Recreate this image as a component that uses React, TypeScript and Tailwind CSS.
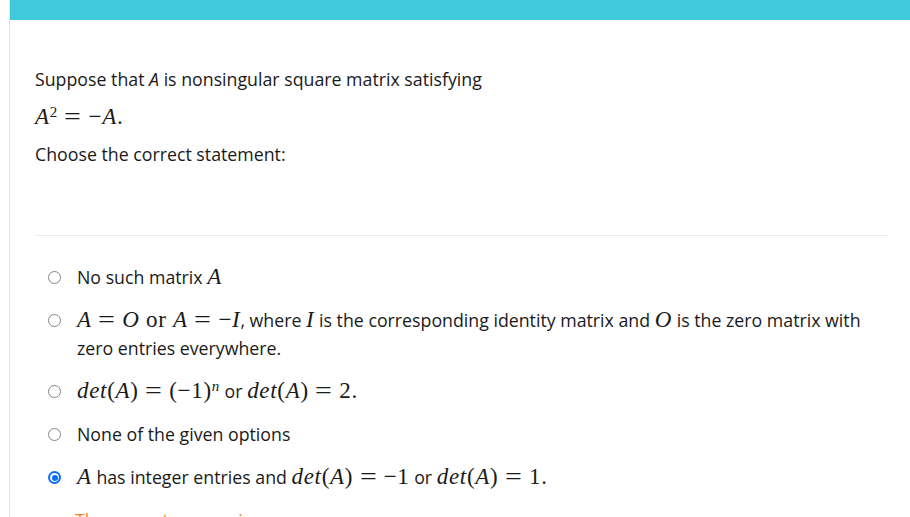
import React from "react";

const M = ({ children }: { children: React.ReactNode }) => (
  <span className="font-['Liberation_Serif',serif] text-[23px] leading-[0] tracking-[0.03em]">{children}</span>
);
const I = ({ children }: { children: React.ReactNode }) => <i className="italic">{children}</i>;
const Eq = () => <span className="mx-[2px] inline-block scale-x-[1.3]">=</span>;

const options: { key: string; checked?: boolean; body: React.ReactNode }[] = [
  {
    key: "a",
    body: (
      <>
        No such matrix{" "}
        <M>
          <I>A</I>
        </M>
      </>
    ),
  },
  {
    key: "b",
    body: (
      <>
        <span className="whitespace-nowrap">
          <M>
            <I>A</I> <Eq /> <I>O</I> or <I>A</I> <Eq /> −<I>I</I>
          </M>
          , where{" "}
          <M>
            <I>I</I>
          </M>{" "}
          is the corresponding identity matrix and{" "}
          <M>
            <I>O</I>
          </M>{" "}
          is the zero matrix with
        </span>
        <br />
        zero entries everywhere.
      </>
    ),
  },
  {
    key: "c",
    body: (
      <>
        <M>
          <I>det</I>(<I>A</I>) <Eq /> (−1)<sup className="text-[15px] italic">n</sup>
        </M>{" "}
        or{" "}
        <M>
          <I>det</I>(<I>A</I>) <Eq /> 2.
        </M>
      </>
    ),
  },
  { key: "d", body: <>None of the given options</> },
  {
    key: "e",
    checked: true,
    body: (
      <>
        <M>
          <I>A</I>
        </M>{" "}
        has integer entries and{" "}
        <M>
          <I>det</I>(<I>A</I>) <Eq /> −1
        </M>{" "}
        or{" "}
        <M>
          <I>det</I>(<I>A</I>) <Eq /> 1.
        </M>
      </>
    ),
  },
];

function Radio({ checked }: { checked?: boolean }) {
  if (checked)
    return (
      <span className="mt-[8px] flex h-[13px] w-[13px] shrink-0 items-center justify-center rounded-full bg-[#0a6cff]">
        <span className="flex h-[9px] w-[9px] items-center justify-center rounded-full bg-white">
          <span className="h-[6px] w-[6px] rounded-full bg-[#0a6cff]" />
        </span>
      </span>
    );
  return <span className="mt-[8px] h-[13px] w-[13px] shrink-0 rounded-full border border-[#858585]" />;
}

export default function App() {
  return (
    <div className="w-[910px] h-[517px] overflow-hidden bg-white text-[#1a1a1a] font-['Open_Sans',sans-serif] text-[17.75px]">
      <div className="ml-[9px] min-h-[517px] border-l border-[#e2e2e2]">
        <div className="h-5 bg-[#40c9da]" />
        <div className="pl-[25px] pr-[22px] pt-[46px]">
          <p className="leading-[26px]">
            Suppose that <i>A</i> is nonsingular square matrix satisfying
          </p>
          <p className="mt-[12px] leading-[26px]">
            <M>
              <I>A</I>
              <sup className="text-[15px]">2</sup> <Eq /> −<I>A</I>.
            </M>
          </p>
          <p className="mt-[11px] leading-[26px]">Choose the correct statement:</p>
          <div className="mt-[68px] border-t border-[#ebebeb]" />
          <ul className="mt-[27px] flex flex-col gap-[15px]">
            {options.map((o) => (
              <li key={o.key} className="flex items-start gap-[16px] pl-[13px] leading-[28px]">
                <Radio checked={o.checked} />
                <span>{o.body}</span>
              </li>
            ))}
          </ul>
          <p className="mt-[16px] pl-[40px] text-[#f0862f] leading-[26px]">The correct answer is</p>
        </div>
      </div>
    </div>
  );
}
